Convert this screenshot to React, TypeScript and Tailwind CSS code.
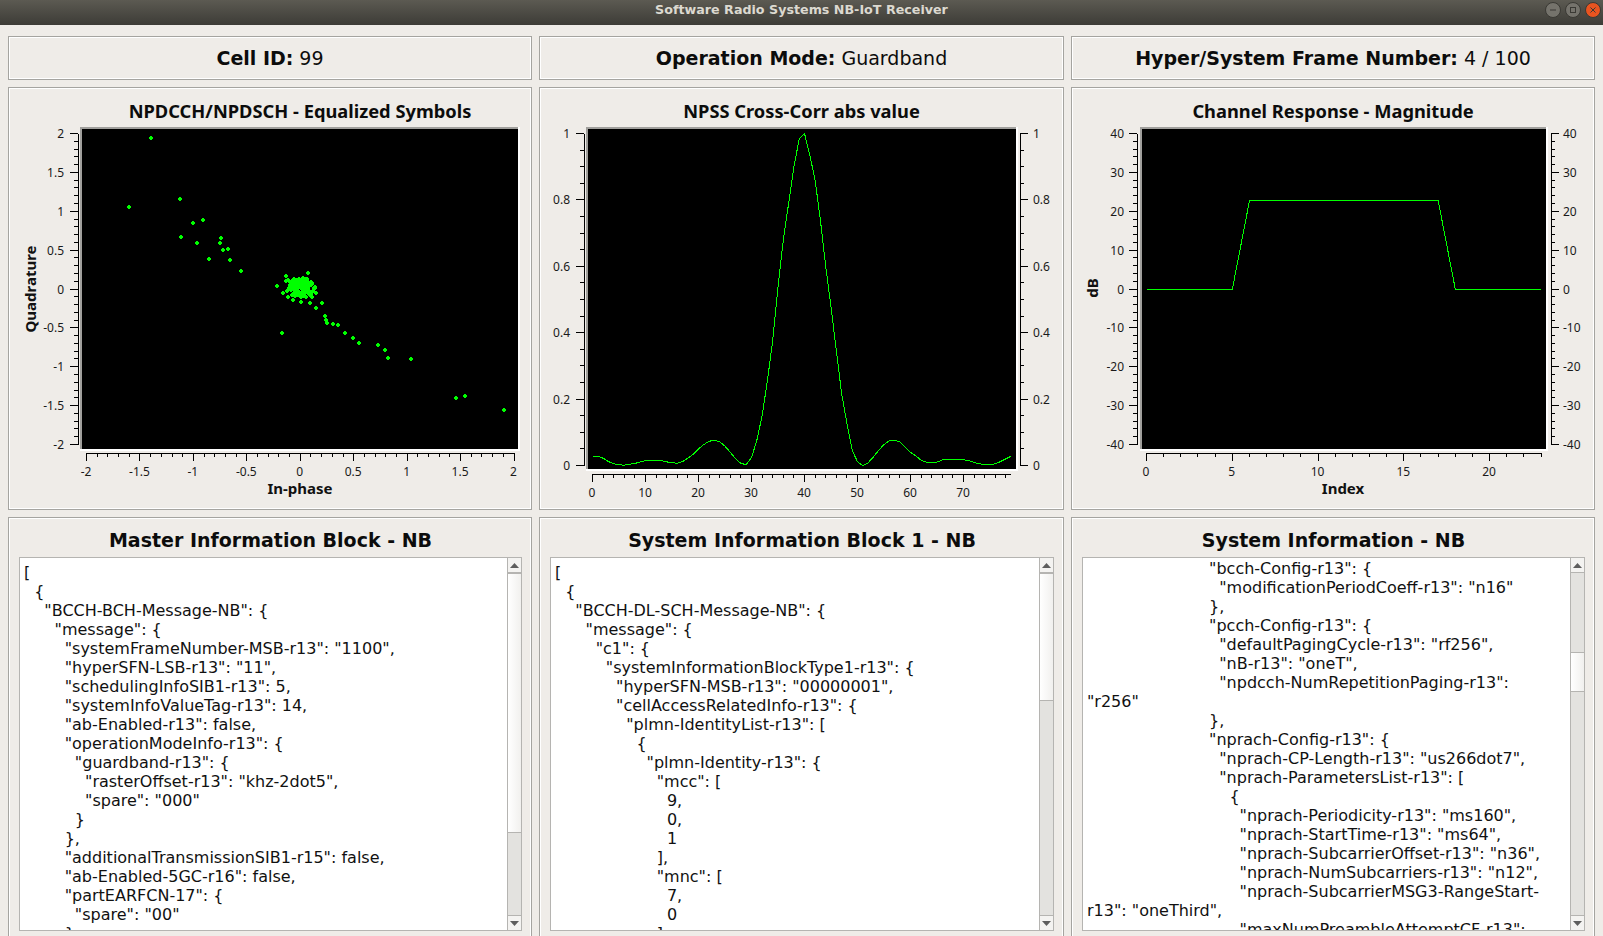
const GREEN = "#00ff00"
const TICK_FONT = "'Noto Sans', sans-serif"

// Constellation points, in page pixels
const scatter: [number, number][] = [
  [151, 138], [129, 207], [180, 199], [193, 223], [203, 220], [181, 237], [221, 238], [220, 243],
  [197, 243], [228, 249], [223, 250], [209, 259], [230, 260], [241, 271], [308, 273], [286, 276],
  [277, 286], [283, 293], [287, 291], [288, 297], [293, 300], [301, 302], [310, 303], [322, 303],
  [316, 308], [316, 293], [312, 297], [288, 280], [286, 281], [294, 279], [325, 316], [326, 320],
  [327, 323], [333, 324], [338, 325], [345, 333], [353, 338], [359, 343], [378, 345], [385, 350],
  [388, 358], [282, 333], [411, 359], [456, 398], [465, 396], [504, 410],
]

// Dense cluster round the origin
let seed = 7
const rnd = () => {
  seed = (seed * 16807) % 2147483647
  return seed / 2147483647
}
for (let i = 0; i < 110; i++) {
  const a = rnd() * Math.PI * 2
  const r = Math.sqrt(rnd())
  scatter.push([Math.round(301 + Math.cos(a) * r * 14), Math.round(288 + Math.sin(a) * r * 10)])
}

const corr = [
  .028, .028, .022, .012, .005, .002, .001, .004, .006, .011, .015, .015, .015, .015, .011, .008, .007, .012, .022, .034,
  .05, .063, .073, .076, .072, .058, .04, .02, .006, .003, .024, .075, .15, .255, .377, .538, .679, .789, .9, .983,
  1, .935, .86, .739, .6, .478, .347, .217, .127, .046, .011, 0, .008, .026, .046, .063, .075, .076, .071, .056,
  .04, .029, .016, .01, .009, .01, .017, .018, .018, .018, .017, .015, .009, .005, .003, .003, .005, .012, .02, .028,
]

interface Tick {
  pos: number
  label?: string
}

function buildTicks(from: number, to: number, perMajor: number, minorPerMajor: number, fmt: (v: number) => string, count: number): Tick[] {
  const out: Tick[] = []
  const step = (to - from) / (count - 1)
  for (let i = 0; i < count; i++) {
    const major = i % minorPerMajor === 0
    out.push({ pos: from + step * i, label: major ? fmt((i / minorPerMajor) * perMajor) : undefined })
  }
  return out
}

function Frame({ x0, y0, x1, y1 }: { x0: number; y0: number; x1: number; y1: number }) {
  return (
    <g shapeRendering="crispEdges">
      <rect x={x0} y={y0} width={x1 - x0 + 2} height={y1 - y0 + 2} fill="#ffffff" />
      <rect x={x0} y={y0} width={x1 - x0} height={y1 - y0} fill="#a09f9c" />
      <rect x={x0 + 2} y={y0 + 2} width={x1 - x0 - 2} height={y1 - y0 - 2} fill="#000000" />
    </g>
  )
}

function YAxis({ x, dir, ticks, labelX }: { x: number; dir: number; ticks: Tick[]; labelX: number }) {
  return (
    <g>
      <g stroke="#000" shapeRendering="crispEdges">
        <line x1={x} x2={x} y1={ticks[0].pos} y2={ticks[ticks.length - 1].pos} />
        {ticks.map((t, i) => (
          <line key={i} x1={x} x2={x + dir * (t.label !== undefined ? 8 : 4)} y1={t.pos} y2={t.pos} />
        ))}
      </g>
      <g fontFamily={TICK_FONT} fontSize="12" fill="#1a1a1a" textAnchor={dir < 0 ? "end" : "start"}>
        {ticks.filter((t) => t.label !== undefined).map((t, i) => (
          <text key={i} x={labelX} y={t.pos + 4.5}>{t.label}</text>
        ))}
      </g>
    </g>
  )
}

function XAxis({ y, ticks, labelY, end }: { y: number; ticks: Tick[]; labelY: number; end?: number }) {
  return (
    <g>
      <g stroke="#000" shapeRendering="crispEdges">
        <line x1={ticks[0].pos} x2={end ?? ticks[ticks.length - 1].pos} y1={y} y2={y} />
        {ticks.map((t, i) => (
          <line key={i} x1={t.pos} x2={t.pos} y1={y} y2={y + (t.label !== undefined ? 8 : 4)} />
        ))}
      </g>
      <g fontFamily={TICK_FONT} fontSize="12" fill="#1a1a1a" textAnchor="middle">
        {ticks.filter((t) => t.label !== undefined).map((t, i) => (
          <text key={i} x={t.pos - 0.5} y={labelY}>{t.label}</text>
        ))}
      </g>
    </g>
  )
}

function AxisTitle({ x, y, text, vertical }: { x: number; y: number; text: string; vertical?: boolean }) {
  return (
    <text
      x={x}
      y={y}
      fontFamily={TICK_FONT}
      fontSize="15"
      fontWeight="700"
      fill="#111"
      textAnchor="middle"
      transform={vertical ? `rotate(-90 ${x} ${y})` : undefined}
    >
      {text}
    </text>
  )
}

function ConstellationPlot() {
  return (
    <svg className="block flex-1" viewBox="9 121 522 388" width="522" height="388">
      <Frame x0={80} y0={127} x1={518} y1={449} />
      {scatter.map(([x, y], i) => (
        <path
          key={i}
          d={`M${x - 1} ${y - 2}h2v1h1v2h-1v1h-2v-1h-1v-2h1z`}
          fill={GREEN}
          shapeRendering="crispEdges"
        />
      ))}
      <YAxis x={78} dir={-1} labelX={64} ticks={buildTicks(133.5, 444.5, 0.5, 5, (v) => String(2 - v), 41)} />
      <XAxis y={453} labelY={476} ticks={buildTicks(86.5, 514, 0.5, 5, (v) => String(v - 2), 41)} />
      <AxisTitle x={36} y={289} text="Quadrature" vertical />
      <AxisTitle x={300} y={494} text="In-phase" />
    </svg>
  )
}

function CorrelationPlot() {
  const yOf = (v: number) => 465.5 - v * 332
  const points = corr.map((v, i) => `${592.5 + i * 5.3},${yOf(v)}`).join(" ")
  const ticks = buildTicks(133.5, 465.5, 0.2, 4, (v) => String(Math.round((1 - v) * 10) / 10), 21)
  return (
    <svg className="block flex-1" viewBox="540 121 523 388" width="523" height="388">
      <Frame x0={586} y0={127} x1={1016} y1={469} />
      <polyline points={points} fill="none" stroke={GREEN} strokeWidth="1" shapeRendering="crispEdges" />
      <YAxis x={584} dir={-1} labelX={570} ticks={ticks} />
      <YAxis x={1020} dir={1} labelX={1033} ticks={ticks} />
      <XAxis y={474} labelY={497} end={1011} ticks={buildTicks(592.5, 1005.9, 10, 5, (v) => String(v), 40)} />
    </svg>
  )
}

function ChannelPlot() {
  const xOf = (v: number) => 1146.5 + v * 17.16
  const yOf = (v: number) => 289.5 - v * 3.8875
  const points = [[0, 0], [5, 0], [6, 22.8], [17, 22.8], [18, 0], [23, 0]]
    .map(([x, y]) => `${xOf(x)},${yOf(y)}`)
    .join(" ")
  const ticks = buildTicks(133.5, 444.5, 10, 5, (v) => String(40 - v), 41)
  return (
    <svg className="block flex-1" viewBox="1072 121 522 388" width="522" height="388">
      <Frame x0={1140} y0={127} x1={1546} y1={449} />
      <polyline points={points} fill="none" stroke={GREEN} strokeWidth="1" shapeRendering="crispEdges" />
      <YAxis x={1137} dir={-1} labelX={1124} ticks={ticks} />
      <YAxis x={1551} dir={1} labelX={1563} ticks={ticks} />
      <XAxis y={453} labelY={476} ticks={buildTicks(1146.5, 1541, 5, 5, (v) => String(v), 24)} />
      <AxisTitle x={1343} y={494} text="Index" />
      <AxisTitle x={1098} y={288} text="dB" vertical />
    </svg>
  )
}

const mib = [
  `[`,
  `  {`,
  `    "BCCH-BCH-Message-NB": {`,
  `      "message": {`,
  `        "systemFrameNumber-MSB-r13": "1100",`,
  `        "hyperSFN-LSB-r13": "11",`,
  `        "schedulingInfoSIB1-r13": 5,`,
  `        "systemInfoValueTag-r13": 14,`,
  `        "ab-Enabled-r13": false,`,
  `        "operationModeInfo-r13": {`,
  `          "guardband-r13": {`,
  `            "rasterOffset-r13": "khz-2dot5",`,
  `            "spare": "000"`,
  `          }`,
  `        },`,
  `        "additionalTransmissionSIB1-r15": false,`,
  `        "ab-Enabled-5GC-r16": false,`,
  `        "partEARFCN-17": {`,
  `          "spare": "00"`,
  `        }`,
]

const sib1 = [
  `[`,
  `  {`,
  `    "BCCH-DL-SCH-Message-NB": {`,
  `      "message": {`,
  `        "c1": {`,
  `          "systemInformationBlockType1-r13": {`,
  `            "hyperSFN-MSB-r13": "00000001",`,
  `            "cellAccessRelatedInfo-r13": {`,
  `              "plmn-IdentityList-r13": [`,
  `                {`,
  `                  "plmn-Identity-r13": {`,
  `                    "mcc": [`,
  `                      9,`,
  `                      0,`,
  `                      1`,
  `                    ],`,
  `                    "mnc": [`,
  `                      7,`,
  `                      0`,
  `                    ]`,
]

const si = [
  `                        "bcch-Config-r13": {`,
  `                          "modificationPeriodCoeff-r13": "n16"`,
  `                        },`,
  `                        "pcch-Config-r13": {`,
  `                          "defaultPagingCycle-r13": "rf256",`,
  `                          "nB-r13": "oneT",`,
  `                          "npdcch-NumRepetitionPaging-r13":`,
  `"r256"`,
  `                        },`,
  `                        "nprach-Config-r13": {`,
  `                          "nprach-CP-Length-r13": "us266dot7",`,
  `                          "nprach-ParametersList-r13": [`,
  `                            {`,
  `                              "nprach-Periodicity-r13": "ms160",`,
  `                              "nprach-StartTime-r13": "ms64",`,
  `                              "nprach-SubcarrierOffset-r13": "n36",`,
  `                              "nprach-NumSubcarriers-r13": "n12",`,
  `                              "nprach-SubcarrierMSG3-RangeStart-`,
  `r13": "oneThird",`,
  `                              "maxNumPreambleAttemptCF-r13":`,
]

function Arrow({ up }: { up?: boolean }) {
  return (
    <div className="flex h-[14px] shrink-0 items-center justify-center bg-[#f4f3f1]">
      <svg width="9" height="5" viewBox="0 0 9 5">
        <path d={up ? "M4.5 0L9 5H0Z" : "M4.5 5L9 0H0Z"} fill="#5e5e5e" />
      </svg>
    </div>
  )
}

function Scrollbar({ before, thumb }: { before: string; thumb: string }) {
  return (
    <div className="flex w-[14px] shrink-0 flex-col border-l border-[#b5b4b1] bg-[#e3e2df]">
      <Arrow up />
      <div className={`${before} shrink-0 border-t border-[#b5b4b1]`} />
      <div className={`${thumb} shrink-0 border-y border-[#b5b4b1] bg-gradient-to-r from-white to-[#f1f0ee]`} />
      <div className="flex-1" />
      <div className="border-t border-[#b5b4b1]">
        <Arrow />
      </div>
    </div>
  )
}

function TextPanel({ title, lines, before, thumb, top }: { title: string; lines: string[]; before: string; thumb: string; top: string }) {
  return (
    <div className="flex h-[425px] flex-col border border-[#a5a4a0] pl-[10px] pr-[9px] shadow-[inset_0_0_0_1px_#ffffff]">
      <div className="flex h-[39px] shrink-0 items-center justify-center pt-[5px] font-['DejaVu_Sans',sans-serif] text-[19px] font-bold text-[#0c0c0c]">
        {title}
      </div>
      <div className="flex h-[374px] shrink-0 border border-[#b5b4b1] bg-white">
        <div className={`min-w-0 flex-1 overflow-hidden pl-[4px] ${top} font-['DejaVu_Sans',sans-serif] text-[16px] leading-[19px] text-[#111]`}>
          {lines.map((line, i) => (
            <div key={i} className="whitespace-pre">{line}</div>
          ))}
        </div>
        <Scrollbar before={before} thumb={thumb} />
      </div>
    </div>
  )
}

function InfoBox({ label, value }: { label: string; value: string }) {
  return (
    <div className="flex h-[44px] items-center justify-center gap-[6px] border border-[#a5a4a0] font-['DejaVu_Sans',sans-serif] text-[19px] text-[#0c0c0c] shadow-[inset_0_0_0_1px_#ffffff]">
      <span className="font-bold">{label}</span>
      <span>{value}</span>
    </div>
  )
}

function PlotPanel({ title, indent, children }: { title: string; indent: string; children: React.ReactNode }) {
  return (
    <div className="flex h-[423px] flex-col border border-[#a5a4a0] shadow-[inset_0_0_0_1px_#ffffff]">
      <div className={`flex h-[33px] shrink-0 items-center justify-center pt-[13px] ${indent} font-['Noto_Sans',sans-serif] text-[18.3px] font-bold leading-[18px] text-[#0c0c0c]`}>
        {title}
      </div>
      {children}
    </div>
  )
}

function WindowButton({ color, children }: { color: string; children: React.ReactNode }) {
  return (
    <div className={`flex h-[16px] w-[16px] items-center justify-center rounded-full border border-[#3a3934] ${color}`}>
      {children}
    </div>
  )
}

export default function App() {
  return (
    <div className="h-[936px] w-[1603px] overflow-hidden bg-[#efece8]">
      {/* Title bar */}
      <div className="relative flex h-[25px] justify-center bg-gradient-to-b from-[#5c5a52] to-[#3d3c37] pt-[2px] font-['DejaVu_Sans',sans-serif] text-[12.7px] font-bold leading-[16px] text-[#dcd9d0]">
        Software Radio Systems NB-IoT Receiver
        <div className="absolute right-[2px] top-[2px] flex gap-[4px]">
          <WindowButton color="bg-[#75736c]">
            <svg width="8" height="8" viewBox="0 0 8 8"><path d="M1 4H7" stroke="#3a3934" strokeWidth="1" /></svg>
          </WindowButton>
          <WindowButton color="bg-[#75736c]">
            <svg width="8" height="8" viewBox="0 0 8 8"><rect x="1.5" y="1.5" width="5" height="5" fill="none" stroke="#3a3934" /></svg>
          </WindowButton>
          <WindowButton color="bg-[#e95420]">
            <svg width="8" height="8" viewBox="0 0 8 8"><path d="M1.5 1.5L6.5 6.5M6.5 1.5L1.5 6.5" stroke="#3a3934" strokeWidth="1" /></svg>
          </WindowButton>
        </div>
      </div>

      <div className="grid grid-cols-[524px_525px_524px] gap-x-[7px] gap-y-[7px] px-[8px] pt-[11px]">
        <InfoBox label="Cell ID:" value="99" />
        <InfoBox label="Operation Mode:" value="Guardband" />
        <InfoBox label="Hyper/System Frame Number:" value="4 / 100" />

        <PlotPanel title="NPDCCH/NPDSCH - Equalized Symbols" indent="pl-[60px]">
          <ConstellationPlot />
        </PlotPanel>
        <PlotPanel title="NPSS Cross-Corr abs value" indent="">
          <CorrelationPlot />
        </PlotPanel>
        <PlotPanel title="Channel Response - Magnitude" indent="">
          <ChannelPlot />
        </PlotPanel>

        <TextPanel title="Master Information Block - NB" lines={mib} before="h-0" thumb="h-[260px]" top="pt-[5px]" />
        <TextPanel title="System Information Block 1 - NB" lines={sib1} before="h-0" thumb="h-[128px]" top="pt-[5px]" />
        <TextPanel title="System Information - NB" lines={si} before="h-[80px]" thumb="h-[40px]" top="pt-[1px]" />
      </div>
    </div>
  )
}
